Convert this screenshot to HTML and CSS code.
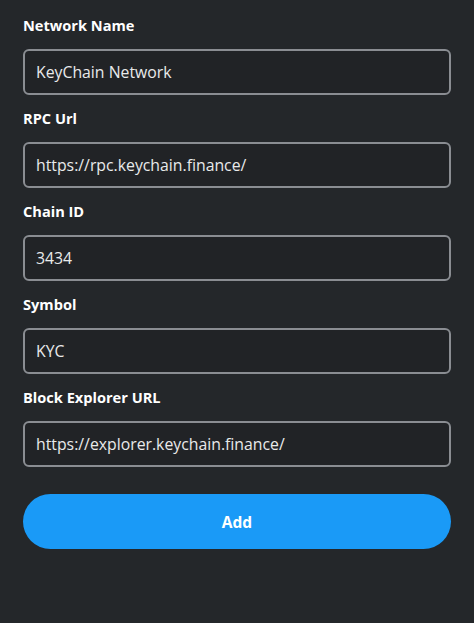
FILE: index.html
```html
<!DOCTYPE html>
<html lang="en">
<head>
<meta charset="utf-8">
<title>Add Network</title>
<link rel="stylesheet" href="styles.css">
</head>
<body>
<main class="form">
  <div class="field">
    <label class="label">Network Name</label>
    <div class="input">KeyChain Network</div>
  </div>
  <div class="field">
    <label class="label">RPC Url</label>
    <div class="input">https://rpc.keychain.finance/</div>
  </div>
  <div class="field">
    <label class="label">Chain ID</label>
    <div class="input">3434</div>
  </div>
  <div class="field">
    <label class="label">Symbol</label>
    <div class="input">KYC</div>
  </div>
  <div class="field">
    <label class="label">Block Explorer URL</label>
    <div class="input">https://explorer.keychain.finance/</div>
  </div>
  <button class="btn">Add</button>
</main>
</body>
</html>
```
FILE: styles.css
```css
html, body {
  margin: 0;
  padding: 0;
  background: #24272a;
  height: 100%;
}
body {
  font-family: "Open Sans", "DejaVu Sans", sans-serif;
  color: #ffffff;
}
.form {
  display: flex;
  flex-direction: column;
  padding: 15px 23px 0 23px;
}
.field {
  display: flex;
  flex-direction: column;
  gap: 14px;
  margin-bottom: 13px;
}
.label {
  font-size: 14.6px;
  line-height: 20px;
  font-weight: 700;
  color: #ffffff;
}
.input {
  box-sizing: border-box;
  height: 46px;
  border: 2px solid #8a8d92;
  border-radius: 6px;
  background: #212326;
  padding: 0 11px;
  display: flex;
  align-items: center;
  font-size: 15.8px;
  color: #e9eaeb;
}
.field:last-of-type {
  margin-bottom: 27px;
}
.btn {
  height: 55px;
  border: none;
  border-radius: 28px;
  background: #1a9af7;
  color: #ffffff;
  font-family: inherit;
  font-size: 15.5px;
  font-weight: 700;
}
```
